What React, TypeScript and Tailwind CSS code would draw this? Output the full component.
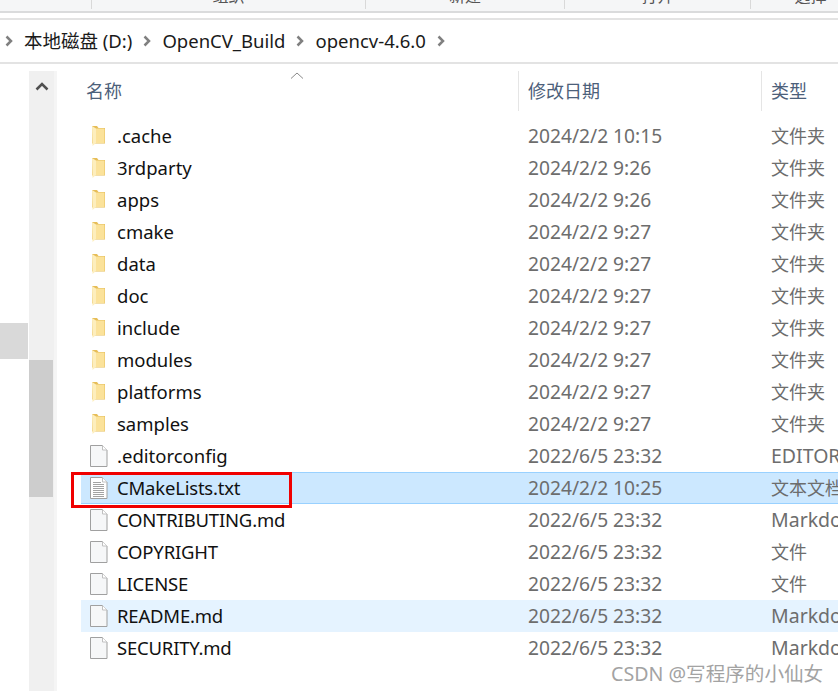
const font = "[font-family:'Noto_Sans','Noto_Sans_CJK_SC',sans-serif]";

const tabs = [
  { label: "组织", width: "w-[274px]" },
  { label: "新建", width: "w-[199px]" },
  { label: "打开", width: "w-[186px]" },
  { label: "选择", width: "w-[120px]" },
];

const crumbs = ["本地磁盘 (D:)", "OpenCV_Build", "opencv-4.6.0"];

type Row = { name: string; date: string; kind: string; icon: "folder" | "file" | "text"; tone?: "selected" | "hover"; tight?: boolean; latin?: boolean };

const rows: Row[] = [
  { name: ".cache", date: "2024/2/2 10:15", kind: "文件夹", icon: "folder" },
  { name: "3rdparty", date: "2024/2/2 9:26", kind: "文件夹", icon: "folder" },
  { name: "apps", date: "2024/2/2 9:26", kind: "文件夹", icon: "folder" },
  { name: "cmake", date: "2024/2/2 9:27", kind: "文件夹", icon: "folder" },
  { name: "data", date: "2024/2/2 9:27", kind: "文件夹", icon: "folder" },
  { name: "doc", date: "2024/2/2 9:27", kind: "文件夹", icon: "folder" },
  { name: "include", date: "2024/2/2 9:27", kind: "文件夹", icon: "folder" },
  { name: "modules", date: "2024/2/2 9:27", kind: "文件夹", icon: "folder" },
  { name: "platforms", date: "2024/2/2 9:27", kind: "文件夹", icon: "folder" },
  { name: "samples", date: "2024/2/2 9:27", kind: "文件夹", icon: "folder" },
  { name: ".editorconfig", date: "2022/6/5 23:32", kind: "EDITORCONFIG 文件", icon: "file", latin: true },
  { name: "CMakeLists.txt", date: "2024/2/2 10:25", kind: "文本文档", icon: "text", tone: "selected", tight: true },
  { name: "CONTRIBUTING.md", date: "2022/6/5 23:32", kind: "Markdown 源文件", icon: "file", tight: true, latin: true },
  { name: "COPYRIGHT", date: "2022/6/5 23:32", kind: "文件", icon: "file", tight: true },
  { name: "LICENSE", date: "2022/6/5 23:32", kind: "文件", icon: "file", tight: true },
  { name: "README.md", date: "2022/6/5 23:32", kind: "Markdown 源文件", icon: "file", tone: "hover", tight: true, latin: true },
  { name: "SECURITY.md", date: "2022/6/5 23:32", kind: "Markdown 源文件", icon: "file", tight: true, latin: true },
];

function FolderIcon() {
  return (
    <svg width="20" height="22" viewBox="0 0 20 22" className="shrink-0">
      <path d="M2 1h5l1.500 2H15v15.500H2z" fill="#e6bd58" />
      <path d="M6 3.500h8.500V18H6z" fill="#fbe29a" />
      <path d="M2 1l4 2.500V18l-3.500 3z" fill="#fdeebd" />
    </svg>
  );
}

function FileIcon({ lines }: { lines?: boolean }) {
  return (
    <svg width="20" height="22" viewBox="0 0 20 22" className="shrink-0">
      <path d="M0.500 0.500h12l4.500 4.500v16.500H0.500z" fill={lines ? "#fff" : "#f6f7f8"} stroke="#a0a0a0" />
      <path d="M12.500 0.500v4.500h4.500" fill="#fff" stroke="#c0c0c0" />
      {lines &&
        [5.5, 7.5, 9.5, 11.5, 13.5, 15.5, 17.5, 19.5].map((y) => (
          <path key={y} d={`M3 ${y}h${y < 7 ? 8 : 11}`} stroke="#a3a3a3" strokeWidth="1" />
        ))}
    </svg>
  );
}

function Chevron() {
  return (
    <svg width="8" height="12" viewBox="0 0 8 12" className="shrink-0">
      <path d="M1.500 1.500 6 6l-4.500 4.500" fill="none" stroke="#808080" strokeWidth="2.500" />
    </svg>
  );
}

export default function App() {
  return (
    <div className={`relative flex h-[691px] w-[838px] flex-col overflow-hidden bg-white text-[19px] ${font}`}>
      {/* ribbon, cut off at the top */}
      <div className="flex h-[13px] overflow-hidden border-b-2 border-[#dadbdc] bg-[#f5f6f7]">
        {tabs.map((tab, i) => (
          <div
            key={tab.label}
            className={`${tab.width} flex h-[9px] shrink-0 items-end justify-center overflow-hidden border-l border-[#d9d9d9] text-[16px] text-[#555] ${i === 0 ? "ml-[91px]" : ""}`}
          >
            <span className="block -translate-y-[2px] leading-[22px]">{tab.label}</span>
          </div>
        ))}
      </div>

      {/* breadcrumb */}
      <div className="mt-[5px] flex h-[46px] shrink-0 items-center gap-[11px] border-y-2 border-[#e3e3e3] pl-[5px] text-[18.500px] text-[#1a1a1a]">
        {crumbs.map((c) => (
          <div key={c} className="flex items-center gap-[11px]">
            <Chevron />
            <span className="whitespace-nowrap">{c}</span>
          </div>
        ))}
        <Chevron />
      </div>

      <div className="flex min-h-0 flex-1">
        {/* nav pane edge */}
        <div className="w-[29px] shrink-0 pt-[259px]">
          <div className="h-[36px] w-[28px] bg-[#d9d9d9]" />
        </div>

        {/* scrollbar */}
        <div className="mt-[7px] flex w-[25px] shrink-0 flex-col bg-[#f0f0f0]">
          <div className="flex h-[30px] items-center justify-center">
            <svg width="14" height="9" viewBox="0 0 14 9">
              <path d="M1.500 7.500 7 2l5.500 5.500" fill="none" stroke="#505050" strokeWidth="2.500" />
            </svg>
          </div>
          <div className="mt-[259px] h-[137px] w-[24px] bg-[#cdcdcd]" />
        </div>
        <div className="mt-[7px] w-[3px] shrink-0 bg-[#f5f5f5]" />

        {/* file list */}
        <div className="relative min-w-0 flex-1 pl-[24px]">
          <svg width="14" height="7" viewBox="0 0 14 7" className="absolute top-[8px] left-[233px]">
            <path d="M1 6.500 7 1l6 5.500" fill="none" stroke="#8a8a8a" />
          </svg>
          <div className="flex h-[47px] pt-[7px] text-[18px] text-[#4c607a]">
            <div className="flex h-[40px] w-[437px] shrink-0 items-center pl-[5px]">名称</div>
            <div className="flex h-[40px] w-[243px] shrink-0 items-center border-l border-[#e5e5e5] pl-[9px]">修改日期</div>
            <div className="flex h-[40px] flex-1 items-center border-l border-[#e5e5e5] pl-[9px]">类型</div>
          </div>
          <div className="mt-[9px]">
            {rows.map((r) => (
              <div
                key={r.name}
                className={`flex h-[32px] items-center whitespace-nowrap ${
                  r.tone === "selected"
                    ? "border-y border-[#99d1ff] bg-[#cce8ff]"
                    : r.tone === "hover"
                      ? "bg-[#e5f3ff]"
                      : ""
                }`}
              >
                <div className="flex w-[437px] shrink-0 items-center gap-[7px] pl-[9px] text-[18.500px] text-[#111]">
                  {r.icon === "folder" ? <FolderIcon /> : <FileIcon lines={r.icon === "text"} />}
                  <span className={r.tight ? "tracking-[-0.2px]" : ""}>{r.name}</span>
                </div>
                <div className="w-[243px] shrink-0 pl-[10px] text-[19.200px] text-[#6d6d6d]">{r.date}</div>
                <div className={`pl-[10px] text-[#6d6d6d] ${r.latin ? "text-[19.500px]" : "text-[18px]"}`}>{r.kind}</div>
              </div>
            ))}
          </div>
        </div>
      </div>

      {/* annotation and watermark sit over the screenshot */}
      <div className="absolute top-[472px] left-[71px] h-[36px] w-[221px] border-[3px] border-[#f00000]" />
      <div className="absolute top-[659px] left-[611px] whitespace-nowrap text-[19.600px] text-[#a3a3a3]">CSDN @写程序的小仙女</div>
    </div>
  );
}
